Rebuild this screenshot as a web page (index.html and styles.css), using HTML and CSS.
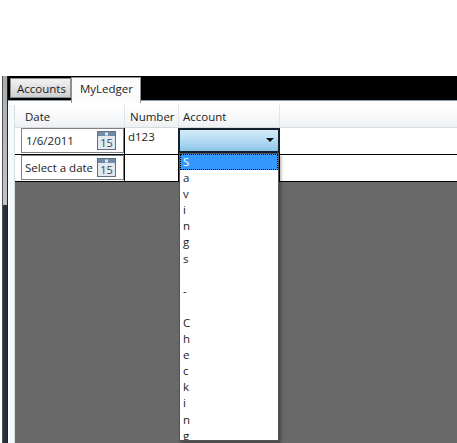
FILE: index.html
```html
<!DOCTYPE html>
<html>
<head>
<meta charset="utf-8">
<title>MyLedger</title>
<link rel="stylesheet" href="styles.css">
</head>
<body>
<div class="app">
  <div class="edge"></div>
  <div class="main">
    <div class="tabs">
      <div class="tab">Accounts</div>
      <div class="tab active">MyLedger</div>
    </div>
    <div class="panel">
      <div class="gutter"></div>
      <div class="grid">
        <div class="row head">
          <div class="cell date">Date</div>
          <div class="cell number">Number</div>
          <div class="cell account">Account</div>
          <div class="cell rest"></div>
        </div>
        <div class="row">
          <div class="cell date">
            <div class="picker">
              <span class="picker-text">1/6/2011</span>
              <svg class="cal" viewBox="0 0 19 19"><rect x="0.5" y="0.5" width="18" height="18" fill="#e4e9ee" stroke="#5f6f80"/><rect x="1" y="1" width="17" height="4" fill="#6f8cab"/><rect x="8" y="1.5" width="3" height="3" fill="#d8e6f2"/><text x="9.5" y="16" text-anchor="middle" class="cal-text">15</text></svg>
            </div>
          </div>
          <div class="cell number top">d123</div>
          <div class="cell account combo-cell">
            <div class="combo"><span class="arrow"></span></div>
          </div>
          <div class="cell rest"></div>
        </div>
        <div class="row">
          <div class="cell date">
            <div class="picker hint">
              <span class="picker-text">Select a date</span>
              <svg class="cal" viewBox="0 0 19 19"><rect x="0.5" y="0.5" width="18" height="18" fill="#e4e9ee" stroke="#5f6f80"/><rect x="1" y="1" width="17" height="4" fill="#6f8cab"/><rect x="8" y="1.5" width="3" height="3" fill="#d8e6f2"/><text x="9.5" y="16" text-anchor="middle" class="cal-text">15</text></svg>
            </div>
          </div>
          <div class="cell number"></div>
          <div class="cell account"></div>
          <div class="cell rest"></div>
        </div>
        <div class="empty"></div>
      </div>
    </div>
  </div>
</div>
<div class="popup">
  <div class="item selected">S</div>
  <div class="item">a</div>
  <div class="item">v</div>
  <div class="item">i</div>
  <div class="item">n</div>
  <div class="item">g</div>
  <div class="item">s</div>
  <div class="item"></div>
  <div class="item">-</div>
  <div class="item"></div>
  <div class="item">C</div>
  <div class="item">h</div>
  <div class="item">e</div>
  <div class="item">c</div>
  <div class="item">k</div>
  <div class="item">i</div>
  <div class="item">n</div>
  <div class="item">g</div>
</div>
</body>
</html>
```
FILE: styles.css
```css
html, body {
  margin: 0;
  height: 443px;
  overflow: hidden;
  background: #fff;
  font-family: "Open Sans", "Noto Sans", sans-serif;
  font-size: 11.5px;
  color: #1c1c1c;
}
.app {
  display: flex;
  height: 367px;
  margin-top: 76px;
  padding-left: 2px;
}
.edge {
  width: 6px;
  box-sizing: border-box;
  border-left: 1px solid #555;
  border-right: 1px solid #222;
  background: linear-gradient(to bottom, #a9adaf 0, #c2c5c6 35%, #26323d 35.2%, #26323d 100%);
}
.main {
  flex: 1;
  display: flex;
  flex-direction: column;
  background: #000;
  min-width: 0;
}
.tabs {
  display: flex;
  height: 24px;
  padding-left: 2px;
  box-sizing: border-box;
  align-items: flex-end;
}
.tab {
  height: 20px;
  line-height: 19px;
  padding-left: 6px;
  width: 61px;
  margin-bottom: 2px;
  box-sizing: border-box;
  background: linear-gradient(#f3f3f3, #cfcfcf);
  border: 1px solid #8c8e94;
  white-space: nowrap;
}
.tab.active {
  height: 26px;
  line-height: 21px;
  width: 70px;
  margin-bottom: -3px;
  background: #fbfbfb;
  border-bottom: 0;
  padding-left: 8px;
  position: relative;
  z-index: 1;
}
.panel {
  flex: 1;
  display: flex;
  background: #fff;
  border-top: 1px solid #8c9aa6;
  padding-top: 4px;
  min-height: 0;
}
.gutter {
  width: 5px;
  background: #f4f9fc;
  border-right: 1px solid #d8dde2;
  margin-left: 1px;
  flex: none;
}
.grid {
  flex: 1;
  display: flex;
  flex-direction: column;
  min-width: 0;
}
.row {
  display: flex;
  height: 27px;
  flex: none;
  border-bottom: 1px solid #000;
  box-sizing: border-box;
}
.row.head {
  height: 23px;
  background: linear-gradient(#fff, #f6f7f8 60%, #eef0f2);
  border-bottom: 1px solid #d5dade;
}
.cell {
  flex: none;
  box-sizing: border-box;
  border-right: 1px solid #000;
}
.head .cell {
  border-right: 1px solid #dfe3e7;
  line-height: 24px;
}
.cell.date { width: 110px; }
.head .cell.date { padding-left: 10px; }
.cell.number { width: 54px; }
.head .cell.number { padding-left: 5px; }
.head .cell.account { padding-left: 4px; }
.cell.top { padding: 1px 0 0 3px; line-height: 16px; }
.cell.account { width: 101px; }
.cell.rest { flex: 1; border-right: 0; }
.picker {
  display: flex;
  align-items: center;
  justify-content: space-between;
  height: 25px;
  width: 103px;
  margin-left: 6px;
  box-sizing: border-box;
  border: 1px solid #7f8387;
  padding: 0 7px 1px 4px;
  background: #fff;
}
.picker.hint { padding-left: 3px; }
.picker-text { white-space: nowrap; }
.cal { width: 19px; height: 19px; flex: none; }
.cal-text { font: 11px "Open Sans", sans-serif; fill: #33475b; }
.combo-cell { padding: 0; }
.combo {
  height: 25px;
  width: 102px;
  margin-left: -1px;
  box-sizing: border-box;
  border: 2px solid #13202c;
  border-radius: 2px;
  background: linear-gradient(#d3ebf9, #b4dcf4 50%, #8cc4e6);
  position: relative;
}
.arrow {
  position: absolute;
  right: 4px;
  top: 8px;
  border: 4px solid transparent;
  border-top: 4px solid #111;
  border-bottom: 0;
}
.empty {
  flex: 1;
  background: #696969;
}
.popup {
  position: absolute;
  left: 179px;
  top: 153px;
  width: 100px;
  height: 288px;
  box-sizing: border-box;
  background: #fff;
  border: 1px solid #555;
  overflow: hidden;
  box-shadow: 2px 2px 3px rgba(0, 0, 0, .35);
}
.item {
  height: 16.1px;
  line-height: 16px;
  padding-left: 3px;
}
.item.selected {
  background: #3399ff;
  color: #fff;
  outline: 1px dotted #000;
  outline-offset: -1px;
}
```
